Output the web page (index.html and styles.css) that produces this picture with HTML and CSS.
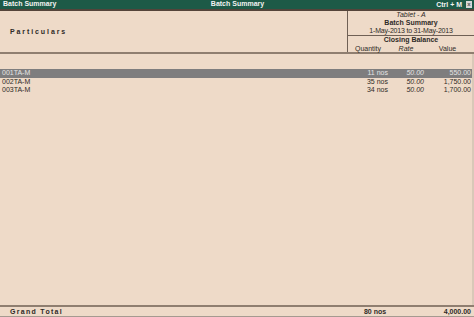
FILE: index.html
```html
<!DOCTYPE html>
<html lang="en">
<head>
    <meta charset="UTF-8">
    <meta name="viewport" content="width=device-width, initial-scale=1.0">
    <title>Batch Summary</title>
    <link rel="stylesheet" href="styles.css">
</head>
<body>
    <div class="screen">
        <div class="titlebar">
            <span class="title-left">Batch Summary</span>
            <span class="title-center">Batch Summary</span>
            <span class="title-right">Ctrl + M <span class="close-box">x</span></span>
        </div>

        <div class="header">
            <div class="particulars">Particulars</div>
            <div class="period">
                <div class="period-top">
                    <div class="item-name">Tablet - A</div>
                    <div class="report-name">Batch Summary</div>
                    <div class="dates">1-May-2013 to 31-May-2013</div>
                </div>
                <div class="closing">Closing Balance</div>
                <div class="cols">
                    <span>Quantity</span>
                    <span>Rate</span>
                    <span>Value</span>
                </div>
            </div>
        </div>

        <div class="rows">
            <div class="row selected">
                <span class="name">001TA-M</span>
                <span class="qty">11 nos</span>
                <span class="rate">50.00</span>
                <span class="value">550.00</span>
            </div>
            <div class="row">
                <span class="name">002TA-M</span>
                <span class="qty">35 nos</span>
                <span class="rate">50.00</span>
                <span class="value">1,750.00</span>
            </div>
            <div class="row">
                <span class="name">003TA-M</span>
                <span class="qty">34 nos</span>
                <span class="rate">50.00</span>
                <span class="value">1,700.00</span>
            </div>
        </div>

        <div class="footer">
            <span class="name total-label">Grand Total</span>
            <span class="qty">80 nos</span>
            <span class="rate"></span>
            <span class="value">4,000.00</span>
        </div>
    </div>
</body>
</html>
```

FILE: styles.css
```css
body {
    margin: 0;
    font-family: "Liberation Sans", Arial, sans-serif;
    font-size: 7px;
    color: #2f2a27;
    background-color: #eedac8;
}
.screen {
    width: 474px;
    height: 317px;
    display: flex;
    flex-direction: column;
    background-color: #eedac8;
}
.titlebar {
    height: 9px;
    line-height: 8px;
    background-color: #1d5a47;
    color: #f2f2f2;
    font-weight: bold;
    display: grid;
    grid-template-columns: 1fr auto 1fr;
    padding: 0 2px 0 3px;
}
.title-right {
    display: flex;
    align-items: center;
    justify-content: flex-end;
    gap: 4px;
}
.close-box {
    width: 6px;
    height: 7px;
    line-height: 7px;
    font-size: 6px;
    text-align: center;
    background-color: #d8d8d8;
    color: #555;
}
.header {
    display: flex;
    height: 41px;
    border-top: 2px solid #54443a;
    border-bottom: 2px solid #8f7e70;
}
.particulars {
    flex: 1;
    font-weight: bold;
    letter-spacing: 1.9px;
    padding-left: 10px;
    padding-top: 17px;
}
.period {
    width: 126px;
    border-left: 1px solid #6f6055;
    display: flex;
    flex-direction: column;
}
.period-top {
    border-bottom: 1px solid #6f6055;
    text-align: center;
    line-height: 8px;
}
.item-name {
    font-style: italic;
}
.report-name {
    font-weight: bold;
}
.dates {
    letter-spacing: -0.2px;
}
.closing {
    text-align: center;
    font-weight: bold;
    line-height: 8px;
}
.cols {
    display: grid;
    grid-template-columns: 40px 36px 47px;
    padding-right: 3px;
    line-height: 9px;
    text-align: center;
}
.cols span:nth-child(2) {
    font-style: italic;
}
.rows {
    flex: 1;
    padding-top: 15px;
    border-right: 2px solid #d9c8b8;
}
.row, .footer {
    display: grid;
    grid-template-columns: 1fr 40px 36px 47px;
    padding-right: 1px;
    height: 8.5px;
    line-height: 8.5px;
}
.row.selected {
    background-color: #7e7d7e;
    color: #e4e4e4;
}
.name {
    padding-left: 2px;
}
.qty, .rate, .value {
    text-align: right;
}
.rate {
    font-style: italic;
}
.footer {
    height: 9px;
    line-height: 9px;
    border-top: 2px solid #8f7e70;
    border-bottom: 1px solid #a59a90;
    padding-right: 3px;
}
.total-label {
    font-weight: bold;
    letter-spacing: 1.3px;
    padding-left: 10px;
}
.footer .qty {
    font-weight: bold;
    text-align: center;
    padding-left: 14px;
}
.footer .value {
    font-weight: bold;
}
```
